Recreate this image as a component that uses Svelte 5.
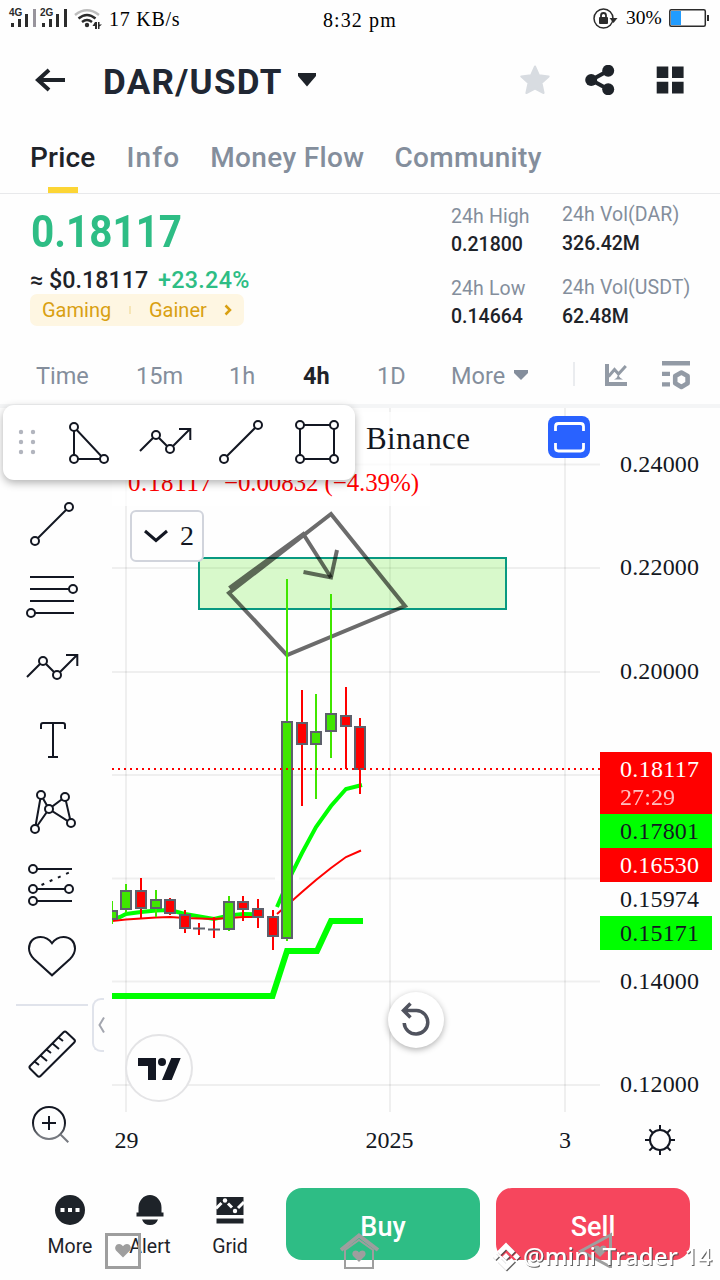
<script>
  const tabs = [
    { label: 'Price', active: true, gap: 0, track: 0.2 },
    { label: 'Info', gap: 31, track: 1.1 },
    { label: 'Money Flow', gap: 30, track: 0.35 },
    { label: 'Community', gap: 30, track: 0.35 }
  ];
  const intervals = ['Time', '15m', '1h', '4h', '1D'];
  const gridY = [464.5, 568, 672, 775, 878.5, 981.5, 1085];
  const gridX = [126, 390, 565];
  const prices = [
    { v: '0.24000', y: 472 },
    { v: '0.22000', y: 575 },
    { v: '0.20000', y: 679 },
    { v: '0.15974', y: 907 },
    { v: '0.14000', y: 989 },
    { v: '0.12000', y: 1092 }
  ];
  // x centre, body top, body bottom, wick top, wick bottom, rising
  const candles = [
    [112, 910, 920, 901, 924, 1],
    [126, 890, 910, 884, 913, 1],
    [141, 890, 909, 878, 918, 0],
    [156, 899, 909, 890, 917, 1],
    [170, 899, 914, 898, 915, 0],
    [185, 914, 929, 910, 933, 0],
    [199, 927.5, 929.5, 923, 935, 0],
    [214, 928.5, 930.5, 917, 938, 0],
    [229, 901, 930, 896, 931, 1],
    [243, 901, 910, 896, 921, 0],
    [258, 908, 918, 899, 928, 0],
    [273, 916, 937, 910, 950, 0],
    [287, 721, 939, 579, 941, 1],
    [302, 722, 745, 690, 806, 0],
    [316, 731, 745, 694, 799, 1],
    [331, 713, 732, 594, 758, 1],
    [346, 715, 727, 687, 769, 0],
    [360, 726, 770, 718, 794, 0]
  ];
  const heart = 'M0 7 L-7 0 C-9 -3 -7 -6.5 -4 -6.5 C-2 -6.5 -.8 -5.5 0 -4.2 C.8 -5.5 2 -6.5 4 -6.5 C7 -6.5 9 -3 7 0Z';
</script>

<div class="screen">
  <div class="status">
    <div class="net">
      <svg width="94" height="24" viewBox="8 6 94 24">
        <text x="9" y="15.5" class="gen">4G</text>
        <text x="40" y="15.5" class="gen">2G</text>
        <g fill="#2b2b2b">
          <rect x="11" y="23" width="3" height="4" /><rect x="18" y="19" width="3" height="8" /><rect x="25" y="14" width="3" height="13" />
          <rect x="33" y="9" width="3" height="18" fill="#98949c" />
          <rect x="42" y="23" width="3" height="4" /><rect x="49" y="19" width="3" height="8" /><rect x="56" y="14" width="3" height="13" /><rect x="64" y="9" width="3" height="18" />
          <circle cx="87" cy="25" r="2.2" />
          <path d="M95 22v7h2v-7zM95 22l-2.500 4h2.500zM98 22v7h1.500v-2.500l2.500-2h-2.500v-2.500z" />
        </g>
        <g fill="none" stroke="#2b2b2b" stroke-width="2.4">
          <path d="M75 15Q87 5.500 99 15" stroke="#bdbdbd" />
          <path d="M78.500 18.500Q87 11.500 95.500 18.500" /><path d="M82 22Q87 18 92 22" />
        </g>
      </svg>
      <span class="speed">17 KB/s</span>
    </div>
    <span class="clock">8:32 pm</span>
    <div class="power">
      <svg width="26" height="24" viewBox="592 7 26 24">
        <circle cx="603.500" cy="18.500" r="9.500" fill="none" stroke="#2b2b2b" stroke-width="1.5" />
        <rect x="599" y="17" width="9" height="7" rx="1" fill="#2b2b2b" />
        <path d="M601 17v-1.500a2.500 2.500 0 0 1 5 0V17" fill="none" stroke="#2b2b2b" stroke-width="1.800" />
        <path d="M609.500 18h8l-4 5z" fill="#2b2b2b" />
      </svg>
      <span class="pct">30%</span>
      <svg width="40" height="20" viewBox="669 8 40 20">
        <rect x="669.800" y="9.800" width="35.500" height="16.500" rx="1.500" fill="none" stroke="#2b2b2b" stroke-width="1.500" />
        <rect x="671" y="11" width="10" height="14" fill="#219cff" /><rect x="707" y="15" width="2" height="6" fill="#2b2b2b" />
      </svg>
    </div>
  </div>

  <header>
    <svg width="30" height="24" viewBox="35 68 30 24"><path d="M65 80H38M49 70L38 80L49 90" fill="none" stroke="#1e2329" stroke-width="4" /></svg>
    <h1>DAR/USDT</h1>
    <svg class="caret" width="18" height="14" viewBox="0 0 18 14"><path d="M0 0H18V3L9 13.500L0 3Z" fill="#1e2329" /></svg>
    <div class="actions">
      <svg width="30" height="30" viewBox="0 0 30 30"><path d="M15 1.500L19 10.300L28.700 11.500L21.500 18L23.600 28L15 23.700L6.400 28L8.500 18L1.300 11.500L11 10.300Z" fill="#d8dce1" stroke="#d8dce1" stroke-width="2" stroke-linejoin="round" /></svg>
      <svg class="share" width="30" height="30" viewBox="584.500 65 30 30"><g fill="#1e2329"><circle cx="590.700" cy="80" r="6" /><circle cx="607.700" cy="70.800" r="6" /><circle cx="607.700" cy="89.200" r="6" /></g><path d="M607.700 70.800L590.700 80L607.700 89.200" fill="none" stroke="#1e2329" stroke-width="4" /></svg>
      <svg width="28" height="28" viewBox="656 66 28 28"><path d="M656.700 66.500h11.600v11.600h-11.600zM672 66.500h11.600v11.600h-11.600zM656.700 81.800h11.600v11.600h-11.600zM672 81.800h11.600v11.600h-11.600z" fill="#1e2329" /></svg>
    </div>
  </header>

  <nav class="tabs">
    {#each tabs as t}
      <span class="tab" class:active={t.active} style="margin-left:{t.gap}px;letter-spacing:{t.track}px">{t.label}</span>
    {/each}
  </nav>

  <section class="summary">
    <div class="quote">
      <div class="price"><span>0.18117</span></div>
      <div class="fiat"><span class="usd">≈ $0.18117</span><span class="chg">+23.24%</span></div>
      <div class="chips">
        <span class="gaming">Gaming</span><i></i><span class="gainer">Gainer</span>
        <svg width="10" height="12" viewBox="0 0 10 12"><path d="M1.500 1.500L6 6L1.500 10.500" fill="none" stroke="#d9a012" stroke-width="2.500" /></svg>
      </div>
    </div>
    <dl class="low-high">
      <dt>24h High</dt><dd>0.21800</dd>
      <dt>24h Low</dt><dd>0.14664</dd>
    </dl>
    <dl class="volume">
      <dt>24h Vol(DAR)</dt><dd>326.42M</dd>
      <dt>24h Vol(USDT)</dt><dd>62.48M</dd>
    </dl>
  </section>

  <div class="intervals">
    {#each intervals as i}<span class:on={i === '4h'}>{i}</span>{/each}
    <span class="more">More <svg width="14" height="11" viewBox="0 0 14 11"><path d="M0 0H14V3L7 10L0 3Z" fill="#848e9c" /></svg></span>
    <i></i>
    <svg width="24" height="24" viewBox="604 362 24 24"><g fill="none" stroke="#929aa5"><path d="M607 363V383H627" stroke-width="4" /><path d="M608.500 375.500L614.500 368.500L618.500 373L625.800 365" stroke-width="3" /></g><path d="M618 374l2.500 3 2.500 1.500h-9l2.500-1.500z" fill="#929aa5" /></svg>
    <svg width="30" height="30" viewBox="662 360 30 30"><path d="M662 361h28v4.500h-28zM662 371.700h8v4.300h-8zM662 382.300h8v4.300h-8z" fill="#929aa5" /><path d="M681.400 372.500l6.200 3.600v7.200l-6.200 3.600l-6.200-3.600v-7.200z" fill="none" stroke="#929aa5" stroke-width="4.600" stroke-linejoin="round" /></svg>
  </div>

  <main class="chart">
    <aside class="tools">
      <svg viewBox="0 0 72 72"><path d="M19 53L53 19" /><circle cx="19" cy="53" r="4" /><circle cx="53" cy="19" r="4" /></svg>
      <svg viewBox="0 0 72 72"><path d="M14 17H58M14 29H58M14 41H58M14 53H58" /><circle cx="57" cy="29" r="4" /><circle cx="15" cy="53" r="4" /></svg>
      <svg viewBox="0 0 72 72"><path d="M11 45L27 29L41 43L61 23M50 23H61.300V34" /><circle cx="27" cy="29" r="4" /><circle cx="41" cy="43" r="4" /></svg>
      <svg viewBox="0 0 72 72"><path d="M25 25V21Q25 19 27 19H47Q49 19 49 21V25M37 19V53M32 53H42" /></svg>
      <svg viewBox="0 0 72 72"><path d="M33 33L25 19L19 53L33 33L49 21L55 47Z" /><circle cx="25" cy="19" r="4" /><circle cx="49" cy="21" r="4" /><circle cx="33" cy="33" r="4" /><circle cx="19" cy="53" r="4" /><circle cx="55" cy="47" r="4" /></svg>
      <svg viewBox="0 0 72 72"><path d="M17 21H56M17 41H53M17 53H56" /><path d="M25.500 37L53 24.500" stroke-dasharray="3 6" /><circle cx="17" cy="21" r="4" /><circle cx="17" cy="41" r="4" /><circle cx="53" cy="41" r="4" /><circle cx="17" cy="53" r="4" /></svg>
      <svg viewBox="0 0 72 72"><path d="M36 23.300C33 19 29 17 24.500 17C17.500 17 13 22 13 28.500C13 33 15 36 18 39L36 55.300L54 39C57 36 59 33 59 28.500C59 22 54.500 17 47.500 17C43 17 39 19 36 23.300Z" /></svg>
      <hr />
      <svg viewBox="0 0 72 72"><path d="M47.500 14.200Q49 12.700 50.500 14.200L58.200 21.500Q59.700 23 58.200 24.500L24.500 58Q23 59.500 21.500 58L14.200 50.700Q12.700 49.200 14.200 47.700ZM18.500 43.500L23 47M24.500 37.500L31 43M30.500 31.500L35 35M36.500 25.500L43 31M42.500 19.500L47 23" /></svg>
      <svg viewBox="0 0 72 72">
        <defs><linearGradient id="fade" x1="0" y1="16" x2="0" y2="54" gradientUnits="userSpaceOnUse"><stop offset=".45" stop-color="#131722" /><stop offset=".8" stop-color="#777a80" /></linearGradient></defs>
        <circle cx="33" cy="33" r="16" style="stroke:url(#fade)" /><path d="M26 33H40M33 26V40" /><path d="M44.500 44.500L52.300 52.300" style="stroke:#777a80" />
      </svg>
    </aside>

    <svg class="plot" width="616" height="764" viewBox="104 404 616 764">
      <defs><clipPath id="pane"><rect x="112" y="404" width="488" height="708" /></clipPath></defs>
      <g stroke="#000" stroke-opacity=".06" stroke-width="2">
        {#each gridY as y}<path d="M112 {y}H600" />{/each}
        {#each gridX as x}<path d="M{x} 404V1112" />{/each}
      </g>
      <rect x="112" y="412" width="318" height="94" fill="#fff" opacity=".75" />
      <rect x="275" y="876" width="24" height="5" fill="#fff" />
      <rect x="199" y="558" width="307" height="51" fill="#40e600" fill-opacity=".2" stroke="#089981" stroke-width="2" />
      <g fill="none" stroke="#000" stroke-opacity=".58" stroke-width="4">
        <path d="M331 514L405 606L287 655L229 593ZM229.300 588L303.300 534L331 577.500" />
        <path d="M303.500 572L331 577.500L337 550" />
      </g>
      <g clip-path="url(#pane)">
        <g fill="none" stroke="#0f0" stroke-width="4">
          <path d="M112 919L120 917L126 914L141 912L156 910.500L170 910L185 914L214 919L229 915.500L243 914L263 914.500" />
          <path d="M277 907L287 884L293 871L302 853L316 827L331 806L346 789L362 785" />
          <path d="M112 996H272.500L287 951H317L331 921H363" stroke-width="6" />
        </g>
        <g fill="none" stroke="#f00" stroke-width="2">
          <path d="M112 921L126 919.500L156 917.500L170 917L185 918L214 919L243 917H263" />
          <path d="M277 914L293 900L302 892L316 880L331 868L346 857L361 850.500" />
        </g>
        {#each candles as [x, top, bottom, hi, lo, up]}
          <path d="M{x} {hi}V{lo}" stroke={up ? '#40e600' : '#f00'} stroke-width="2" />
          {#if bottom - top > 3}
            <rect x={x - 5} y={top + 1} width="10" height={bottom - top - 2} fill={up ? '#40e600' : '#f00'} stroke="#5d606b" stroke-width="2" />
          {:else}
            <rect x={x - 6} y={top} width="12" height="2" fill="#5d606b" />
          {/if}
        {/each}
      </g>
      <path d="M112 769H600" stroke="#f00" stroke-width="2" stroke-dasharray="2 4" />

      <g class="serif">
        <text x="366" y="449" font-size="31" textLength="104">Binance</text>
        <g fill="#f00" font-size="25"><text x="128" y="491" textLength="84">0.18117</text><text x="224" y="491" textLength="195">−0.00832 (−4.39%)</text></g>
        <g font-size="24">
          {#each prices as p}<text x="620" y={p.y} textLength="79">{p.v}</text>{/each}
          <path d="M600 752H710Q712 752 712 754V814H600ZM600 848H712V882H600Z" fill="#f00" />
          <path d="M600 814H712V848H600ZM600 916H712V950H600Z" fill="#0f0" />
          <text x="620" y="777" textLength="79" fill="#fff">0.18117</text>
          <text x="620" y="805" textLength="55" fill="#fff" opacity=".75">27:29</text>
          <text x="620" y="839" textLength="79">0.17801</text>
          <text x="620" y="873" textLength="79" fill="#fff">0.16530</text>
          <text x="620" y="941" textLength="79">0.15171</text>
          <text x="114.500" y="1148" textLength="24">29</text>
          <text x="365.500" y="1148" textLength="48">2025</text>
          <text x="559" y="1148">3</text>
        </g>
      </g>
      <g fill="none" stroke="#131722" stroke-width="2">
        <circle cx="660" cy="1140" r="10" />
        {#each [0, 45, 90, 135, 180, 225, 270, 315] as a}<path d="M660 1130V1125" transform="rotate({a} 660 1140)" />{/each}
      </g>
    </svg>

    <div class="strip"></div>
    <div class="floating">
      <svg width="48" height="75" viewBox="3 405 48 75"><g fill="#b2b5be">{#each [432, 442, 452] as y}<circle cx="21" cy={y} r="2.200" /><circle cx="33" cy={y} r="2.200" />{/each}</g></svg>
      <svg width="76" height="75"><path d="M23 22V54H53Z" /><circle cx="23" cy="22" r="4" /><circle cx="23" cy="54" r="4" /><circle cx="53" cy="54" r="4" /></svg>
      <svg width="76" height="75"><path d="M13 46L29 30L43 44L63 24M52 24H63.300V35" /><circle cx="29" cy="30" r="4" /><circle cx="43" cy="44" r="4" /></svg>
      <svg width="76" height="75"><path d="M21 54L55 20" /><circle cx="21" cy="54" r="4" /><circle cx="55" cy="20" r="4" /></svg>
      <svg width="76" height="75"><path d="M21 20H55V54H21Z" /><circle cx="21" cy="20" r="4" /><circle cx="55" cy="20" r="4" /><circle cx="21" cy="54" r="4" /><circle cx="55" cy="54" r="4" /></svg>
    </div>
    <div class="full"><svg width="42" height="42" viewBox="548 416 42 42"><path d="M555.500 431V426.500Q555.500 423.500 558.500 423.500H580.500Q583.500 423.500 583.500 426.500V431M555.500 443V448Q555.500 451 558.500 451H580.500Q583.500 451 583.500 448V443" fill="none" stroke="#fff" stroke-width="2.800" /></svg></div>
    <div class="count"><svg width="24" height="14" viewBox="0 0 24 14"><path d="M1 2L12 11.500L23 2" fill="none" stroke="#131722" stroke-width="3" /></svg><span>2</span></div>
    <div class="undo"><svg width="36" height="36" viewBox="398 1002 36 36"><path d="M410.500 1003.500L403.500 1010.500L410.500 1017.500M404 1010.500H416.500A11.800 11.800 0 1 1 404.200 1023" fill="none" stroke="#50535e" stroke-width="3.500" /></svg></div>
    <div class="brand"><svg width="44" height="24" viewBox="138 1057 44 24"><path d="M138 1058H156V1080H148V1066H138ZM171.300 1058H180.700L171.700 1080H162Z" fill="#131722" /><circle cx="162" cy="1062" r="4" fill="#131722" /></svg></div>
    <div class="fold"><svg width="8" height="18" viewBox="0 0 8 18"><path d="M7 1.500L2.500 9L7 16.500" fill="none" stroke="#a3a6af" stroke-width="2" /></svg></div>
  </main>

  <footer>
    <div class="item">
      <svg width="32" height="32" viewBox="54 1194 32 32"><circle cx="70" cy="1210" r="15" fill="#1e2329" /><path d="M60.500 1208h4v4h-4zM68 1208h4v4h-4zM75.500 1208h4v4h-4z" fill="#fff" /></svg>
      <span>More</span>
    </div>
    <div class="item">
      <svg width="32" height="32" viewBox="134 1194 32 32"><path d="M138.500 1207.500a11.500 12.500 0 0 1 23 0v5h2v4h-27v-4h2zM142 1219.500h16q-2 5.500-8 5.500t-8-5.500z" fill="#1e2329" /></svg>
      <span>Alert</span>
    </div>
    <div class="item">
      <svg width="32" height="32" viewBox="214 1194 32 32"><path d="M216.500 1197h27v18h-27zM216.500 1218.500h27v5h-27z" fill="#1e2329" /><path d="M216 1208.500l5.500-5.500M228 1203.500l4 4M238 1208l6-6" stroke="#fff" stroke-width="3" /><circle cx="225" cy="1200.500" r="2.200" fill="#fff" /><circle cx="235" cy="1211" r="2.200" fill="#fff" /></svg>
      <span>Grid</span>
    </div>
    <button class="buy">Buy</button>
    <button class="sell">Sell</button>

    <svg class="overlay" width="720" height="112" viewBox="0 1168 720 112">
      <g fill="none" stroke="#9e9e9e" stroke-width="3">
        <rect x="106.500" y="1234.500" width="33" height="33" />
        <path d="M341 1250L359 1235.500L378 1250" stroke-width="4" />
        <path d="M345 1250V1268H373V1250L359 1240Z" stroke-width="2" />
        <path d="M610.500 1268V1235L581 1251L610.500 1267" />
      </g>
      <g fill="#9e9e9e"><path d={heart} transform="translate(123 1250.500)" /><path d={heart} transform="translate(359 1256) scale(.85)" /><path d={heart} transform="translate(600 1251) scale(.85)" /></g>
      <g class="mark" fill="#fff">
        <path d="M506 1242.500L515 1251.500L511.500 1255L506 1249.500L500.500 1255L497 1251.500ZM506 1270.500L515 1261.500L511.500 1258L506 1263.500L500.500 1258L497 1261.500ZM506 1253L509.500 1256.500L506 1260L502.500 1256.500ZM495.500 1253L499 1256.500L495.500 1260L492 1256.500ZM516.500 1253L520 1256.500L516.500 1260L513 1256.500Z" />
        <text x="523" y="1265" textLength="189">@mini Trader 14</text>
      </g>
    </svg>
  </footer>
</div>

<style>
  :global(body) { background: #fefefe; overflow: hidden; }
  .screen { width: 720px; height: 1280px; overflow: hidden; background: #fefefe; font-family: Roboto, sans-serif; color: #1e2329; display: flex; flex-direction: column; }
  svg { display: block; flex: none; }
  .status { height: 40px; flex: none; display: grid; grid-template-columns: 323px 1fr auto; padding-right: 11px; font: 20px/24px "Liberation Serif", serif; color: #000; }
  .net { display: flex; padding: 6px 0 0 8px; }
  .speed { margin: 1px 0 0 7px; letter-spacing: .75px; line-height: 24px; }
  .clock { padding-top: 8px; letter-spacing: 1.1px; }
  .power { display: flex; padding-top: 7px; }
  .power svg:last-child { margin-top: 1px; }
  .pct { width: 43px; margin: -1px 0 0 8px; font-size: 19.5px; }
  .gen { font: bold 10px "Liberation Sans", sans-serif; fill: #2b2b2b; }
  header { height: 80px; flex: none; display: flex; align-items: center; padding: 0 36px 0 35px; }
  h1 { margin: 6px 0 0 38px; font-size: 35px; font-weight: 700; line-height: 40px; letter-spacing: 1.3px; width: 194px; white-space: nowrap; color: #202733; }
  .caret { margin-left: 1px; }
  .actions { margin-left: auto; display: flex; align-items: center; width: 164px; justify-content: space-between; }
  .share { position: relative; left: -3px; }
  .tabs { height: 73px; flex: none; border-bottom: 1px solid #e8e9eb; display: flex; padding-left: 30px; font-size: 28px; font-weight: 500; line-height: 76px; color: #848e9c; }
  .tab { position: relative; white-space: nowrap; height: 73px; }
  .tab.active { color: #1e2329; }
  .tab.active::after { content: ""; position: absolute; left: 18px; bottom: 0; width: 30px; height: 6px; background: #fcd535; }
  .summary { height: 152px; flex: none; display: grid; grid-template-columns: 421px 111px 1fr; padding-left: 30px; }
  .price { margin-top: 18px; font-size: 44px; line-height: 40px; font-weight: 700; color: #2ebd85; }
  .price span { display: inline-block; transform: scaleX(.92); transform-origin: left; margin-left: 1px; }
  .fiat { margin-top: 15px; line-height: 26px; font-size: 23.300px; font-weight: 500; display: flex; }
  .usd { width: 128px; white-space: nowrap; }
  .chg { color: #2ebd85; letter-spacing: .3px; }
  .chips { margin-top: 1px; width: 202px; height: 32px; padding-left: 12px; border-radius: 7px; background: #fef6e2; color: #d9a012; display: flex; align-items: center; font-size: 20px; }
  .gaming { width: 87px; }
  .chips i { width: 2px; height: 8px; background: #f6e5b5; margin-right: 18px; }
  .gainer { width: 75px; }
  dl { margin: 0; font-size: 19.500px; line-height: 28px; white-space: nowrap; }
  dt { color: #848e9c; letter-spacing: .1px; }
  dd { margin: 0 0 16px; font-weight: 500; }
  .low-high { padding-top: 9px; }
  .volume { padding-top: 7px; }
  .volume dd { line-height: 30px; margin-bottom: 15px; }
  .intervals { height: 56px; padding-top: 2px; flex: none; display: grid; grid-template-columns: 100px 93px 74px 74px 74px 122px 31px 58px 30px; padding-left: 36px; align-items: center; font-size: 23.500px; color: #848e9c; }
  .intervals .on { color: #1e2329; font-weight: 700; }
  .intervals i { width: 2px; height: 24px; background: #eaecef; margin-bottom: 4px; }
  .intervals svg { margin-bottom: 2px; }
  .more { display: flex; align-items: center; gap: 9px; }
  .chart { position: relative; height: 764px; flex: none; display: flex; }
  .tools { width: 104px; padding-top: 84px; box-sizing: border-box; display: flex; flex-direction: column; align-items: center; }
  .tools svg { width: 72px; height: 72px; }
  .tools svg, .floating svg { fill: none; stroke: #131722; stroke-width: 2; }
  .tools svg circle { fill: #fefefe; }
  .tools svg:last-child circle { fill: none; }
  .floating svg:not(:first-child) circle { fill: #fff; }
  .floating svg:first-child { stroke: none; }
  .tools hr { width: 72px; height: 2px; margin: 12px 0; border: 0; background: #e0e3eb; flex: none; }
  .serif { font-family: "Liberation Serif", serif; fill: #131722; }
  .strip { position: absolute; left: 0; right: 0; top: 0; height: 4px; background: #f4f5f6; }
  .floating { position: absolute; left: 3px; top: 1px; width: 352px; height: 75px; display: flex; background: #fff; border-radius: 11px; box-shadow: 0 3px 8px rgba(0, 0, 0, .3); }
  .full { position: absolute; left: 548px; top: 12px; width: 42px; height: 42px; border-radius: 8px; background: #2962ff; }
  .count { position: absolute; left: 130px; top: 106px; width: 74px; height: 52px; box-sizing: border-box; border: 2px solid #d1d4dc; border-radius: 6px; background: #fefefe; display: flex; align-items: center; padding-left: 12px; gap: 12px; font: 28px "Liberation Serif", serif; color: #131722; }
  .undo { position: absolute; left: 388px; top: 588px; width: 56px; height: 56px; border-radius: 50%; background: #fff; box-shadow: 0 2px 6px rgba(0, 0, 0, .3); display: grid; place-items: center; }
  .brand { position: absolute; left: 125px; top: 630px; width: 68px; height: 68px; box-sizing: border-box; border: 2px solid #e4e4e6; border-radius: 50%; background: #fefefe; display: grid; place-items: center; padding: 2px 0 0 2px; }
  .fold { position: absolute; left: 92px; top: 594px; width: 12px; height: 54px; box-sizing: border-box; border: 2px solid #e0e3eb; border-right: 0; border-radius: 9px 0 0 9px; display: flex; align-items: center; padding-left: 3px; }
  footer { position: relative; height: 112px; flex: none; display: grid; grid-template-columns: 80px 80px 80px 194px 194px; padding-left: 30px; align-items: start; }
  .item { padding-top: 26px; display: flex; flex-direction: column; align-items: center; font-size: 19.500px; line-height: 24px; gap: 9px; }
  button { height: 72px; margin: 20px 0 0; padding: 6px 0 0; border: 0; border-radius: 16px; color: #fff; font: 500 27px Roboto, sans-serif; }
  .buy { background: #2ebd85; margin-left: 16px; width: 194px; }
  .sell { background: #f6465d; margin-left: 32px; width: 194px; }
  .overlay { position: absolute; left: 0; top: 0; }
  .mark { filter: drop-shadow(1px 1px .6px rgba(70, 70, 70, .85)); font: 500 24px "Noto Sans", sans-serif; }
</style>
